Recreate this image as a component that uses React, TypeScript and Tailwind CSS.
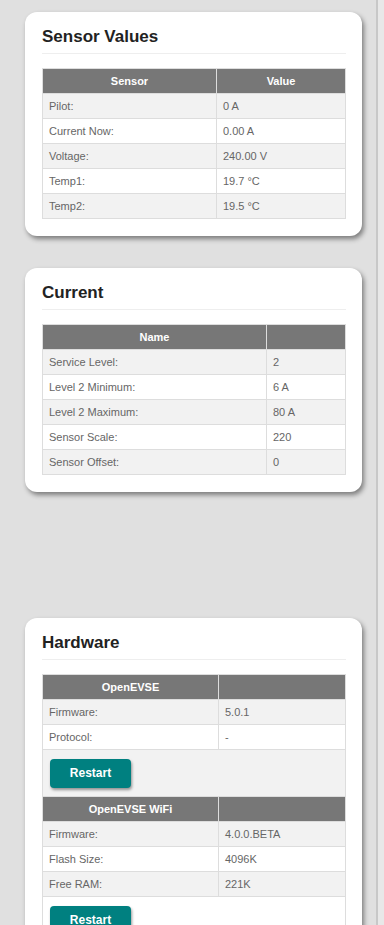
import React from "react";

type Row = [string, string];

const font = { fontFamily: '"Liberation Sans", Arial, sans-serif' };

function Header({ left, right, w }: { left: string; right: string; w: string }) {
  return (
    <tr className="bg-[#777777] text-white">
      <th className={`${w} h-[25px] border border-[#dddddd] text-center text-[11px] font-bold`}>{left}</th>
      <th className="h-[25px] border border-[#dddddd] text-center text-[11px] font-bold">{right}</th>
    </tr>
  );
}

function DataRow({ r, gray }: { r: Row; gray: boolean }) {
  return (
    <tr className={gray ? "bg-[#f2f2f2]" : "bg-white"}>
      <td className="h-[25px] border border-[#dddddd] pl-[6px] text-[11px] text-[#666666]">{r[0]}</td>
      <td className="h-[25px] border border-[#dddddd] pl-[6px] text-[11px] text-[#666666]">{r[1]}</td>
    </tr>
  );
}

function RestartRow({ gray }: { gray: boolean }) {
  return (
    <tr className={gray ? "bg-[#f2f2f2]" : "bg-white"}>
      <td colSpan={2} className="h-[47px] border border-[#dddddd] pl-[7px]">
        <button className="w-[81px] h-[29px] rounded-[4px] bg-[#008080] text-white text-[12px] font-bold shadow-[1px_2px_3px_rgba(0,0,0,0.4)]">
          Restart
        </button>
      </td>
    </tr>
  );
}

function Card({ title, children, className = "" }: { title: string; children: React.ReactNode; className?: string }) {
  return (
    <div className={`ml-[25px] w-[337px] rounded-[12px] bg-white pt-[15px] pl-[17px] pr-[16px] pb-[17px] shadow-[2px_3px_5px_rgba(0,0,0,0.45)] ${className}`}>
      <h2 className="text-[17px] leading-[20px] font-bold text-[#222222] pb-[6px] border-b border-[#eeeeee]">{title}</h2>
      <table className="mt-[14px] w-[304px] border-collapse">
        <tbody>{children}</tbody>
      </table>
    </div>
  );
}

export default function App() {
  const sensors: Row[] = [
    ["Pilot:", "0 A"],
    ["Current Now:", "0.00 A"],
    ["Voltage:", "240.00 V"],
    ["Temp1:", "19.7 °C"],
    ["Temp2:", "19.5 °C"],
  ];
  const current: Row[] = [
    ["Service Level:", "2"],
    ["Level 2 Minimum:", "6 A"],
    ["Level 2 Maximum:", "80 A"],
    ["Sensor Scale:", "220"],
    ["Sensor Offset:", "0"],
  ];
  return (
    <div className="flex min-h-[925px] bg-[#e8e8e8]" style={font}>
      <div className="w-[378px] shrink-0 bg-[#e0e0e0] border-r-2 border-[#c8c8c8] pt-[12px] pb-[40px]">
        <Card title="Sensor Values">
          <Header left="Sensor" right="Value" w="w-[174px]" />
          {sensors.map((r, i) => (
            <DataRow key={i} r={r} gray={i % 2 === 0} />
          ))}
        </Card>
        <Card title="Current" className="mt-[32px]">
          <Header left="Name" right="" w="w-[224px]" />
          {current.map((r, i) => (
            <DataRow key={i} r={r} gray={i % 2 === 0} />
          ))}
        </Card>
        <Card title="Hardware" className="mt-[126px]">
          <Header left="OpenEVSE" right="" w="w-[176px]" />
          <DataRow r={["Firmware:", "5.0.1"]} gray />
          <DataRow r={["Protocol:", "-"]} gray={false} />
          <RestartRow gray />
          <Header left="OpenEVSE WiFi" right="" w="w-[176px]" />
          <DataRow r={["Firmware:", "4.0.0.BETA"]} gray />
          <DataRow r={["Flash Size:", "4096K"]} gray={false} />
          <DataRow r={["Free RAM:", "221K"]} gray />
          <RestartRow gray={false} />
        </Card>
      </div>
    </div>
  );
}
